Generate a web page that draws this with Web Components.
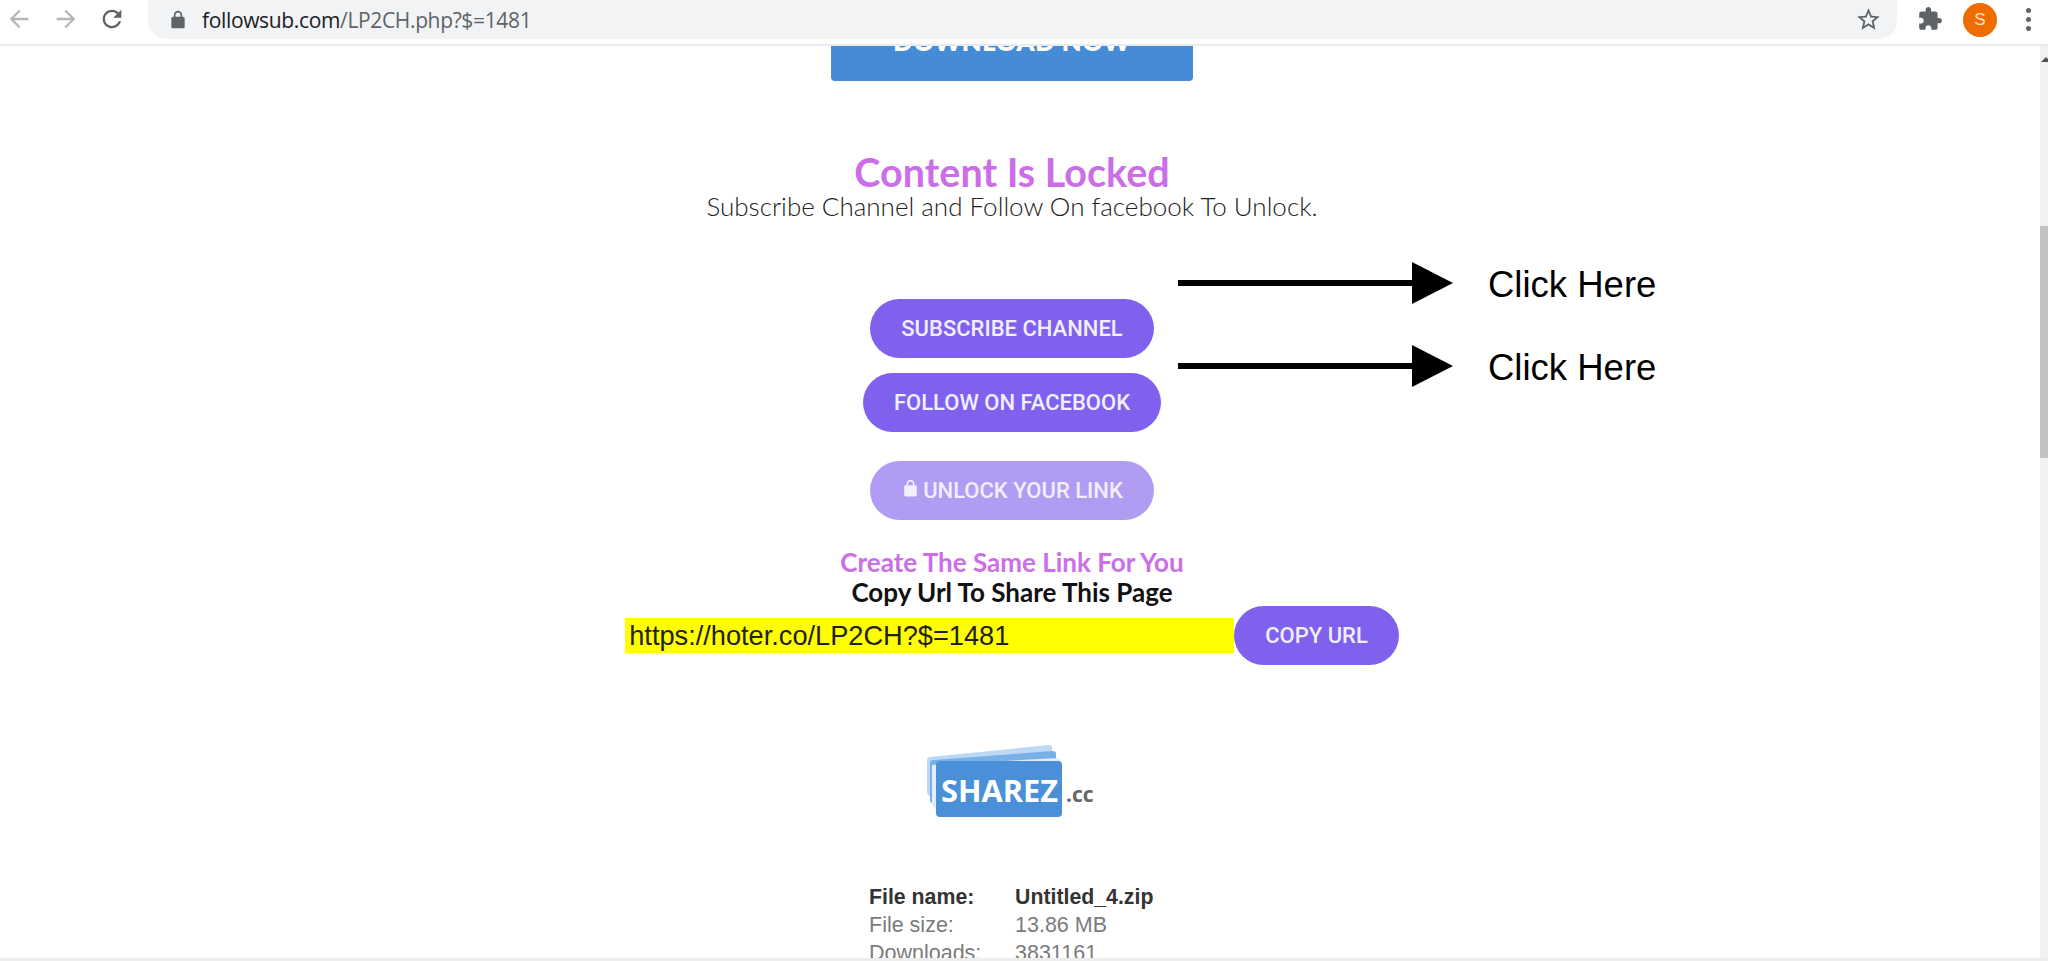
<!DOCTYPE html>
<html>
<head>
<meta charset="utf-8">
<title>followsub.com</title>
<style>
  html, body { margin: 0; height: 961px; overflow: hidden; background: #fff; }
</style>
</head>
<body>
<browser-window>
  <browser-bar slot="bar" url-host="followsub.com" url-path="/LP2CH.php?$=1481"></browser-bar>
  <locked-page></locked-page>
</browser-window>

<script>
const svgIcon = (d, size, fill) =>
  `<svg width="${size}" height="${size}" viewBox="0 0 24 24" fill="${fill}"><path d="${d}"/></svg>`;

const ICONS = {
  back: "M20 11H7.83l5.59-5.59L12 4l-8 8 8 8 1.41-1.41L7.83 13H20v-2z",
  forward: "M4 11h12.17l-5.59-5.59L12 4l8 8-8 8-1.41-1.41L16.17 13H4v-2z",
  reload: "M17.65 6.35C16.2 4.9 14.21 4 12 4c-4.42 0-7.99 3.58-7.99 8s3.57 8 7.99 8c3.73 0 6.84-2.55 7.73-6h-2.08c-.82 2.33-3.04 4-5.65 4-3.31 0-6-2.69-6-6s2.69-6 6-6c1.66 0 3.14.69 4.22 1.78L13 11h7V4l-2.35 2.35z",
  lock: "M18 8h-1V6c0-2.76-2.24-5-5-5S7 3.24 7 6v2H6c-1.1 0-2 .9-2 2v10c0 1.1.9 2 2 2h12c1.1 0 2-.9 2-2V10c0-1.1-.9-2-2-2zM9 6c0-1.66 1.34-3 3-3s3 1.34 3 3v2H9V6z",
  star: "M22 9.24l-7.19-.62L12 2 9.19 8.63 2 9.24l5.46 4.73L5.82 21 12 17.27 18.18 21l-1.63-7.03L22 9.24zM12 15.4l-3.76 2.27 1-4.28-3.32-2.88 4.38-.38L12 6.1l1.71 4.04 4.38.38-3.32 2.88 1 4.28L12 15.4z",
  puzzle: "M20.5 11H19V7c0-1.1-.9-2-2-2h-4V3.5C13 2.12 11.88 1 10.5 1S8 2.12 8 3.5V5H4c-1.1 0-1.99.9-1.99 2v3.8H3.5c1.49 0 2.7 1.21 2.7 2.7s-1.21 2.7-2.7 2.7H2V20c0 1.1.9 2 2 2h3.8v-1.5c0-1.49 1.21-2.7 2.7-2.7 1.49 0 2.7 1.21 2.7 2.7V22H17c1.1 0 2-.9 2-2v-4h1.5c1.38 0 2.5-1.12 2.5-2.5S21.88 11 20.5 11z"
};

class BrowserWindow extends HTMLElement {
  constructor() {
    super();
    this.attachShadow({ mode: "open" });
    this.shadowRoot.innerHTML = `
      <style>
        :host { display: flex; flex-direction: column; width: 2048px; height: 961px; overflow: hidden; }
        .view { display: flex; flex: 1; min-height: 0; position: relative; }
        .content { width: 2040px; overflow: hidden; }
        .track { width: 8px; background: #f1f1f1; position: relative; }
        .up { position: absolute; top: 11px; left: 1px; width: 0; height: 0;
              border-left: 5px solid transparent; border-right: 5px solid transparent; border-bottom: 5px solid #505050; }
        .thumb { position: absolute; top: 180px; left: 0; right: 0; height: 232px; background: #c1c1c1; }
        .bottom { position: absolute; left: 0; right: 0; bottom: 0; height: 3px; background: #ededed; }
      </style>
      <slot name="bar"></slot>
      <div class="view">
        <div class="content"><slot></slot></div>
        <div class="track"><div class="up"></div><div class="thumb"></div></div>
        <div class="bottom"></div>
      </div>
    `;
  }
}

class BrowserBar extends HTMLElement {
  constructor() {
    super();
    this.attachShadow({ mode: "open" });
  }

  connectedCallback() {
    const host = this.getAttribute("url-host") || "";
    const path = this.getAttribute("url-path") || "";
    this.shadowRoot.innerHTML = `
      <style>
        :host { display: flex; align-items: flex-start; height: 46px; box-sizing: border-box;
                background: #fff; border-bottom: 2px solid #e8eaed; }
        .nav { display: flex; align-items: center; height: 38px; }
        .nav svg { display: block; }
        .back { margin-left: 5px; }
        .forward { margin-left: 19px; }
        .reload { margin-left: 18px; }
        .omni { display: flex; align-items: center; width: 1749px; height: 39px; margin-left: 22px;
                background: #f1f3f4; border-radius: 0 0 19px 19px; box-sizing: border-box; padding-left: 20px; }
        .url { font: 21px "Open Sans", sans-serif; color: #5f6368; margin-left: 14px; letter-spacing: -0.35px; white-space: nowrap; }
        .url b { font-weight: 400; color: #202124; }
        .star { margin-left: auto; margin-right: 15px; display: flex; }
        .puzzle { margin-left: 20px; }
        .avatar { width: 34px; height: 34px; border-radius: 50%; background: #ef6c00; color: #ffe2c8;
                  font: 17px "Liberation Sans", sans-serif; display: flex; align-items: center; justify-content: center;
                  margin-left: 20px; margin-top: 1px; }
        .dots { display: flex; flex-direction: column; gap: 4px; margin-left: 29px; }
        .dots i { display: block; width: 5px; height: 5px; border-radius: 50%; background: #5f6368; }
      </style>
      <div class="nav">
        <span class="back">${svgIcon(ICONS.back, 28, "#b4b6b8")}</span>
        <span class="forward">${svgIcon(ICONS.forward, 28, "#b4b6b8")}</span>
        <span class="reload">${svgIcon(ICONS.reload, 28, "#5f6368")}</span>
      </div>
      <div class="omni">
        ${svgIcon(ICONS.lock, 20, "#5f6368")}
        <span class="url"><b>${host}</b>${path}</span>
        <span class="star">${svgIcon(ICONS.star, 27, "#5f6368")}</span>
      </div>
      <div class="nav">
        <span class="puzzle">${svgIcon(ICONS.puzzle, 26, "#5f6368")}</span>
        <span class="avatar">S</span>
        <span class="dots"><i></i><i></i><i></i></span>
      </div>
    `;
  }
}

class PillButton extends HTMLElement {
  constructor() {
    super();
    this.attachShadow({ mode: "open" });
    this.shadowRoot.innerHTML = `
      <style>
        :host { display: inline-flex; align-items: center; justify-content: center; height: 59px; padding: 0 31px;
                box-sizing: border-box; border-radius: 30px; background: #7f61ed; color: #f1eefd;
                font: 500 22px Roboto, sans-serif; white-space: nowrap; }
        :host([faded]) { background: #b19cf3; }
      </style>
      <slot></slot>
    `;
  }
}

class ArrowNote extends HTMLElement {
  constructor() {
    super();
    this.attachShadow({ mode: "open" });
    this.shadowRoot.innerHTML = `
      <style>
        :host { display: block; position: absolute; left: 1178px; width: 520px; height: 42px; }
        .wrap { display: flex; align-items: center; height: 42px; }
        .line { flex: none; width: 234px; height: 6px; background: #000; }
        .head { flex: none; width: 0; height: 0; border-left: 41px solid #000;
                border-top: 21px solid transparent; border-bottom: 21px solid transparent; }
        .label { margin: 4px 0 0 35px; font: 36.5px "Liberation Sans", sans-serif; color: #000; white-space: nowrap; }
      </style>
      <div class="wrap">
        <div class="line"></div><div class="head"></div>
        <span class="label"><slot></slot></span>
      </div>
    `;
  }
}

class ShareUrl extends HTMLElement {
  constructor() {
    super();
    this.attachShadow({ mode: "open" });
    this.shadowRoot.innerHTML = `
      <style>
        :host { display: flex; align-items: center; }
        .field { width: 609px; height: 35px; box-sizing: border-box; padding-left: 4px; background: #ffff00;
                 color: #222; font: 27.2px/35px "Liberation Sans", sans-serif; white-space: nowrap; }
      </style>
      <div class="field"><slot name="url"></slot></div>
      <pill-button><slot name="label"></slot></pill-button>
    `;
  }
}

class SharezLogo extends HTMLElement {
  constructor() {
    super();
    this.attachShadow({ mode: "open" });
    this.shadowRoot.innerHTML = `
      <style>
        :host { display: block; width: 170px; height: 80px; }
        svg { display: block; }
      </style>
      <svg width="170" height="80" viewBox="0 0 170 80">
        <path d="M0 17 Q0 14 3 14 L122 2 Q125 2 125 5 L125 20 L8 30 L8 60 L0 50 Z" fill="#bcd8f4"/>
        <path d="M3 20 Q3 17 6 17 L126 8 Q129 8 129 11 L129 24 L8 30 L8 64 L3 58 Z" fill="#79b0e7"/>
        <path d="M5 22 L132 15 L134 20 L10 20 L10 68 L5 62 Z" fill="#e3eefb"/>
        <rect x="9" y="18" width="126" height="56" rx="4" fill="#4a90d9"/>
        <text x="14" y="59" font-family="Open Sans, sans-serif" font-weight="700" font-size="31" fill="#fff"
              textLength="117" lengthAdjust="spacingAndGlyphs">SHAREZ</text>
        <text x="139" y="59" font-family="Open Sans, sans-serif" font-weight="700" font-size="21" fill="#666">.cc</text>
      </svg>
    `;
  }
}

class FileInfo extends HTMLElement {
  constructor() {
    super();
    this.attachShadow({ mode: "open" });
    this.shadowRoot.innerHTML = `
      <style>
        :host { display: grid; grid-template-columns: 146px 138px; grid-auto-rows: 28px;
                font: 21.5px/28px "Liberation Sans", sans-serif; color: #7b7b7b; white-space: nowrap; }
        .name { font-weight: 700; color: #333; font-size: 21.3px; }
      </style>
      <span class="name">File name:</span><span class="name">Untitled_4.zip</span>
      <span>File size:</span><span>13.86 MB</span>
      <span>Downloads:</span><span>3831161</span>
    `;
  }
}

class LockedPage extends HTMLElement {
  constructor() {
    super();
    this.attachShadow({ mode: "open" });
    this.shadowRoot.innerHTML = `
      <style>
        :host { display: block; position: relative; width: 2024px; height: 915px; }
        .col { display: flex; flex-direction: column; align-items: center; }
        .download { width: 362px; height: 75px; box-sizing: border-box; padding-bottom: 6px; margin-top: -40px;
                    background: #468bd6; border-radius: 4px;
                    color: #fff; font: 800 25.5px Lato, sans-serif; letter-spacing: 0.6px;
                    display: flex; align-items: center; justify-content: center; }
        h1 { margin: 70px 0 0; font: 700 39.5px/41px Lato, sans-serif; color: #cb6ee8; }
        .sub { margin: 0; font: 300 26px/28px Lato, sans-serif; color: #222; }
        .first { margin-top: 79px; }
        .second { margin-top: 15px; }
        .third { margin-top: 29px; }
        .lock { display: inline-block; vertical-align: -2px; margin-right: 3px; }
        h2 { margin: 28px 0 0; font: 700 26px/29px Lato, sans-serif; color: #cb6ee8; }
        h3 { margin: 1px 0 0; font: 700 26px/28px Lato, sans-serif; color: #111; }
        sharez-logo { margin-top: 78px; }
        file-info { margin-top: 60px; margin-left: -2px; }
        arrow-note.a { top: 216px; }
        arrow-note.b { top: 299px; }
      </style>
      <div class="col">
        <div class="download">DOWNLOAD NOW</div>
        <h1>Content Is Locked</h1>
        <p class="sub">Subscribe Channel and Follow On facebook To Unlock.</p>
        <pill-button class="first">SUBSCRIBE CHANNEL</pill-button>
        <pill-button class="second">FOLLOW ON FACEBOOK</pill-button>
        <pill-button class="third" faded><span class="lock">${svgIcon(ICONS.lock, 19, "#f1eefd")}</span>UNLOCK YOUR LINK</pill-button>
        <h2>Create The Same Link For You</h2>
        <h3>Copy Url To Share This Page</h3>
        <share-url>
          <span slot="url">https://hoter.co/LP2CH?$=1481</span>
          <span slot="label">COPY URL</span>
        </share-url>
        <sharez-logo></sharez-logo>
        <file-info></file-info>
      </div>
      <arrow-note class="a">Click Here</arrow-note>
      <arrow-note class="b">Click Here</arrow-note>
    `;
  }
}

customElements.define("browser-window", BrowserWindow);
customElements.define("browser-bar", BrowserBar);
customElements.define("pill-button", PillButton);
customElements.define("arrow-note", ArrowNote);
customElements.define("share-url", ShareUrl);
customElements.define("sharez-logo", SharezLogo);
customElements.define("file-info", FileInfo);
customElements.define("locked-page", LockedPage);
</script>
</body>
</html>
